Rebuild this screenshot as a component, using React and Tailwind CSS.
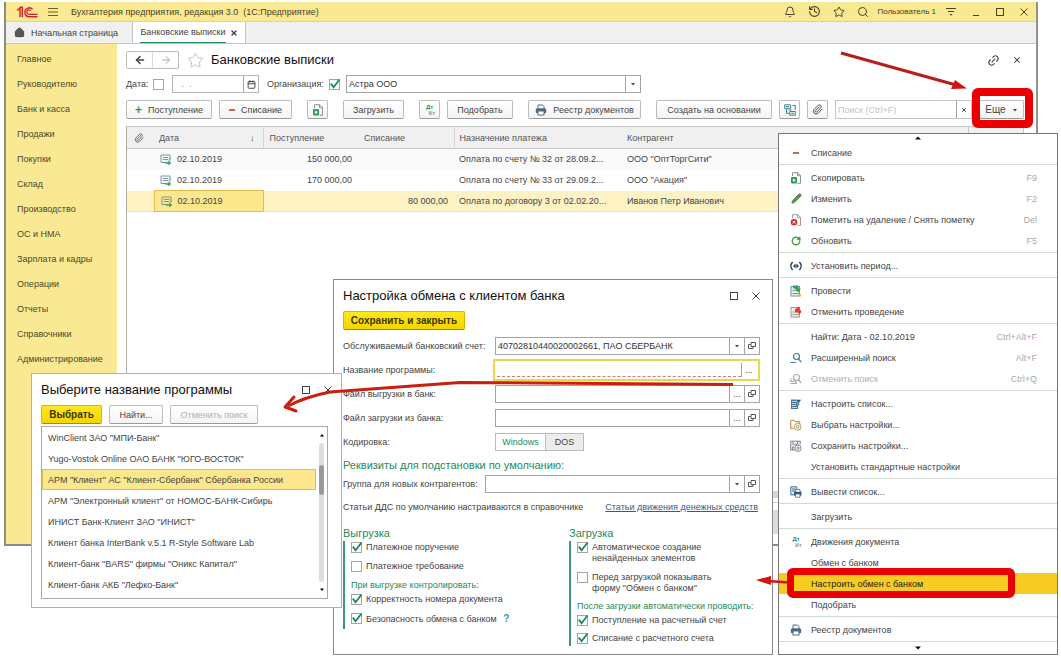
import React from 'react';
import clsx from 'clsx';
import { Bell, History, Star, Search, House, Paperclip, Link2, Calendar, X, ArrowLeft, ArrowRight, RotateCw, Pencil } from 'lucide-react';

const SECTIONS = [
  'Главное', 'Руководителю', 'Банк и касса', 'Продажи', 'Покупки', 'Склад', 'Производство',
  'ОС и НМА', 'Зарплата и кадры', 'Операции', 'Отчеты', 'Справочники', 'Администрирование',
];

const STATEMENTS = [
  { date: '02.10.2019', income: '150 000,00', expense: '', purpose: 'Оплата по счету № 32 от 28.09.2...', partner: 'ООО "ОптТоргСити"' },
  { date: '02.10.2019', income: '170 000,00', expense: '', purpose: 'Оплата по счету № 33 от 29.09.2...', partner: 'ООО "Акация"' },
  { date: '02.10.2019', income: '', expense: '80 000,00', purpose: 'Оплата по договору 3 от 02.02.20...', partner: 'Иванов Петр Иванович', selected: true },
];

const PROGRAMS = [
  'WinClient ЗАО "МПИ-Банк"',
  'Yugo-Vostok Online ОАО БАНК "ЮГО-ВОСТОК"',
  'АРМ "Клиент" АС "Клиент-Сбербанк" Сбербанка России',
  'АРМ "Электронный клиент" от НОМОС-БАНК-Сибирь',
  'ИНИСТ Банк-Клиент ЗАО "ИНИСТ"',
  'Клиент банка InterBank v.5.1 R-Style Software Lab',
  'Клиент-банк "BARS" фирмы "Оникс Капитал"',
  'Клиент-банк АКБ "Лефко-Банк"',
];

/* ---------- icons ---------- */

const Logo = () => (
  <svg viewBox="0 0 22 12" className="h-3 w-[22px]" fill="none" stroke="#d3232a" strokeWidth="1.5">
    <path d="M1 4.5 4 2v9M6.300 11V1.200L3.500 1.200" />
    <path d="M16.500 3.200A4.500 4.500 0 1 0 12.500 10.800H21.500" />
    <path d="M14.800 4.600A2.300 2.300 0 1 0 12.600 8.400H21.500" strokeWidth="1.200" />
  </svg>
);

const CopyIcon = () => (
  <svg viewBox="0 0 12 12" className="size-3" fill="none">
    <path d="M2.500 4V.7h5.300l2.700 2.700v7.900H7.500" stroke="#7f9a8b" />
    <path d="M7.500.7v3h3" stroke="#7f9a8b" />
    <rect x="1" y="5" width="6" height="6.500" rx="1" fill="#2f9a5b" />
    <path d="M4 6.500v3.500M2.400 8.200h3.200" stroke="#fff" />
  </svg>
);

const DeleteMarkIcon = () => (
  <svg viewBox="0 0 12 12" className="size-3" fill="none">
    <path d="M2.500 4V.7h5.300l2.700 2.700v7.900H7.500M7.500.7v3h3" stroke="#a99a9a" />
    <circle cx="4" cy="8.200" r="3.300" fill="#c9343b" />
    <path d="M2.700 6.900l2.600 2.600M5.300 6.900 2.700 9.500" stroke="#fff" />
  </svg>
);

const PeriodIcon = () => (
  <svg viewBox="0 0 12 12" className="size-3" fill="none" stroke="#1d3f5e" strokeWidth="1.500">
    <path d="M2.600 2C.4 4.300.4 7.700 2.600 10M9.400 2c2.200 2.300 2.200 5.700 0 8" />
    <path d="M5.600 3.500 3 6l2.600 2.500zM6.400 3.500 9 6 6.400 8.500z" fill="#1d3f5e" stroke="none" />
  </svg>
);

const PostIcon = () => (
  <svg viewBox="0 0 12 12" className="size-3" fill="none">
    <rect x="1" y="1.500" width="8.500" height="9.500" fill="#eaf2ec" stroke="#6f93a5" />
    <path d="M2.500 5.500h4M2.500 8.500h6" stroke="#6f93a5" />
    <path d="M3 .5h5.500v3H11L8 7.500 5 3.500H3z" fill="#2fa35d" />
    <path d="M8 9h3v2.500H8z" fill="#e3b54a" />
  </svg>
);

const UnpostIcon = () => (
  <svg viewBox="0 0 12 12" className="size-3" fill="none">
    <rect x="1" y="1.500" width="8.500" height="9.500" fill="#f3ead8" stroke="#9a9a8a" />
    <path d="M2.500 6h3M2.500 8.500h6" stroke="#8fa5b0" />
    <path d="M5 3.500 8.500.5 11.500 6l-2.500 2.500L8 6.500H5z" fill="#e0402f" />
  </svg>
);

const FindIcon = ({ color = '#3a7ca8', cancel }) => (
  <svg viewBox="0 0 12 12" className="size-3" fill="none" stroke={color} strokeWidth="1.200">
    <circle cx="6.500" cy="4.500" r="3" />
    <path d="m8.600 6.800 2.600 3.200M.5 10.500h5.500" />
    {cancel && <path d="M1 5.500v3h2.500M4 7l3 3.500" />}
  </svg>
);

const ListSettingsIcon = () => (
  <svg viewBox="0 0 12 12" className="size-3" fill="none">
    <path d="M1 1.500h7v9.500H1z" fill="#4d7896" />
    <path d="M2 3.500h5M2 5.500h4M2 7.500h4M2 9.500h5" stroke="#dbe7ef" strokeWidth=".8" />
    <path d="M5.500 1.500h6L9.300 4.500v3.700L7.700 7V4.500z" fill="#2d587a" stroke="#fff" strokeWidth=".5" />
  </svg>
);

const SettingsIcon = ({ color, fill }) => (
  <svg viewBox="0 0 12 12" className="size-3" fill="none" stroke={color}>
    <path d="M.7 1.200h3.500l1 1.300h4.500v3M.7 1.200v8.500h3" fill={fill} />
    <circle cx="7.700" cy="7.800" r="3.400" fill="#fff" />
    <circle cx="7.700" cy="7.800" r="1.300" />
  </svg>
);

const SaveSettingsIcon = () => (
  <svg viewBox="0 0 12 12" className="size-3" fill="none" stroke="#7a8590">
    <path d="M5 10H.7V1.200h9.600v3M3 1.200v3h4.500v-3M2.500 10V7H4" fill="#e6ebef" />
    <circle cx="8" cy="8.200" r="3.200" fill="#fff" />
    <circle cx="8" cy="8.200" r="1.200" />
  </svg>
);

const PrinterIcon = () => (
  <svg viewBox="0 0 12 12" className="size-3" fill="none">
    <path d="M3 4.500V1h4.500L9 2.500v2" stroke="#4f6d84" />
    <rect x=".8" y="4.200" width="10.400" height="5" rx="1.500" fill="#4a6a82" />
    <rect x="3" y="7" width="6" height="4" fill="#fff" stroke="#4f6d84" />
  </svg>
);

const OutputListIcon = () => (
  <svg viewBox="0 0 12 12" className="size-3" fill="none">
    <path d="M.8.800h6v8h-6z" fill="#e8f0f5" stroke="#3f6c8c" />
    <path d="M2 3h3.500M2 5h3" stroke="#3f6c8c" />
    <path d="M4 5.500h7.500v4H4z" fill="#31597a" />
    <path d="M5.500 8h4.500v3.200H5.500zM5.500 5.500v-2h4.500v2" fill="#fff" stroke="#3f6c8c" strokeWidth=".8" />
  </svg>
);

const DtKt = () => (
  <span className="flex flex-col text-[6px] leading-[6px] font-bold">
    <span className="text-[#2f8a68]">Дт</span>
    <span className="pl-[5px] text-[#c08080]">Кт</span>
  </span>
);

const StructureIcon = () => (
  <svg viewBox="0 0 12 12" className="size-3" fill="none" stroke="#3c8584">
    <path d="M.7.8h6v3.500h-6zM5.800 7.500h5.500v3.700H5.800zM2.500 4.300v5h3.300" />
    <path d="M4.500 6h3M8.500 1.500h2.800v4.300M2 2.500h3M7.300 9.300h2.500" stroke="#4a77a8" />
  </svg>
);

const DocIcon = () => (
  <svg viewBox="0 0 12 12" className="size-3" fill="none">
    <path d="M10 7V2H1v7.500h5" stroke="#7b96a3" />
    <path d="M2.800 4.500h5.500M2.800 6.500h5.500" stroke="#7b96a3" />
    <path d="M5.500 9.300h3V7.800l2.500 2.200-2.500 2v-1.500h-3zM10 4.500V8" fill="#43a365" stroke="#43a365" strokeWidth=".6" />
  </svg>
);

const OpenIcon = () => (
  <svg viewBox="0 0 8 8" className="size-2" fill="none" stroke="#555">
    <path d="M3 .5h4.500v4H3zM2.500 2.500h-2v4H5V5" />
  </svg>
);

const MaximizeIcon = () => (
  <svg viewBox="0 0 8 8" className="size-2" fill="none" stroke="currentColor">
    <rect x=".5" y=".5" width="7" height="7" />
  </svg>
);

const CloseIcon = () => (
  <svg viewBox="0 0 8 8" className="size-2" fill="none" stroke="currentColor">
    <path d="m.5.5 7 7M7.500.5l-7 7" />
  </svg>
);

const DropDot = () => (
  <svg viewBox="0 0 6 4" className="h-1 w-1.5" fill="#444"><path d="M1 1h4L3 3.500z" /></svg>
);

/* ---------- shared controls ---------- */

const Button = ({ className, children, ...rest }) => (
  <button
    type="button"
    className={clsx('flex h-[19px] shrink-0 items-center justify-center gap-1.5 rounded-xs border border-[#bcbcbc] border-b-[#9a9a9a] bg-linear-to-b from-white to-[#f4f4f4] whitespace-nowrap', className)}
    {...rest}
  >
    {children}
  </button>
);

const PrimaryButton = ({ className, children }) => (
  <button type="button" className={clsx('h-[19px] rounded-xs border border-[#d6b800] border-b-[#a08a00] bg-linear-to-b from-[#ffe81a] to-[#f6d400] text-[10px] font-bold text-[#3d3600]', className)}>
    {children}
  </button>
);

const Tick = ({ checked, ...rest }) => (
  <span className="relative block size-[11px] shrink-0">
    <input type="checkbox" defaultChecked={checked} className="peer block size-[11px] appearance-none border border-[#a5a5a5] bg-white" {...rest} />
    <svg viewBox="0 0 12 12" className="pointer-events-none absolute inset-0 hidden overflow-visible peer-checked:block" fill="none" stroke="#1d8a5a" strokeWidth="2">
      <path d="m2 5 3 4 6.500-8.500" />
    </svg>
  </span>
);

const CheckRow = ({ checked, children, className }) => (
  <label className={clsx('flex items-start gap-1 leading-[11px]', className)}>
    <Tick checked={checked} />
    <span>{children}</span>
  </label>
);

const Cell = ({ children, ...rest }) => (
  <button type="button" className="flex w-[15px] shrink-0 items-center justify-center border-l border-[#a3a3a3]" {...rest}>
    {children}
  </button>
);

const FieldRow = ({ id, label, value = '', labelClass = 'w-[152px]', dots, select }) => (
  <div className="flex h-[18px] items-center">
    <label htmlFor={id} className={clsx('shrink-0 whitespace-nowrap', labelClass)}>{label}</label>
    <div className="flex h-full min-w-0 grow border border-[#a3a3a3] bg-white">
      {select ? (
        <select id={id} className="min-w-0 grow appearance-none px-0.5 text-[#333]">
          <option>{value}</option>
        </select>
      ) : (
        <input id={id} defaultValue={value} className="min-w-0 grow px-0.5" />
      )}
      <Cell aria-label="Выбрать">{dots ? '...' : <DropDot />}</Cell>
      <Cell aria-label="Открыть"><OpenIcon /></Cell>
    </div>
  </div>
);

/* ---------- main window ---------- */

const TitleBar = () => (
  <header className="flex h-5 items-center border-b border-[#cfd8a0] bg-[#f9e993] pr-2 pl-2.5 text-[#4a4222]">
    <Logo />
    <svg viewBox="0 0 10 10" className="ml-2.5 size-2.5" stroke="#6b6130"><path d="M0 1.500h10M0 5h10M0 8.500h10" /></svg>
    <h1 className="ml-[13px] whitespace-pre">Бухгалтерия предприятия, редакция 3.0  (1С:Предприятие)</h1>
    <div className="ml-auto flex items-center gap-3">
      <button type="button" aria-label="Уведомления"><Bell size={12} strokeWidth={2} /></button>
      <button type="button" aria-label="История"><History size={13} strokeWidth={2} /></button>
      <button type="button" aria-label="Избранное"><Star size={12} strokeWidth={2} /></button>
      <button type="button" aria-label="Поиск"><Search size={12} strokeWidth={2} /></button>
    </div>
    <span className="ml-2 text-[8px]">Пользователь 1</span>
    <div className="ml-2.5 flex items-center gap-4">
      <svg viewBox="0 0 10 10" className="size-2.5" stroke="currentColor" fill="currentColor"><path d="M0 1.500h10M2 4.500h6" /><path d="M3.500 7h3L5 8.800z" strokeWidth="0" /></svg>
      <button type="button" aria-label="Свернуть"><svg viewBox="0 0 8 8" className="size-2" stroke="currentColor"><path d="M1 7.500h6" /></svg></button>
      <button type="button" aria-label="Развернуть"><MaximizeIcon /></button>
      <button type="button" aria-label="Закрыть"><CloseIcon /></button>
    </div>
  </header>
);

const Tabs = () => (
  <nav className="flex h-[22px] border-b border-[#c4c4c4] bg-[#f0f0f0]">
    <a href="#home" className="flex w-[126px] items-center gap-1.5 pl-2">
      <House size={11} fill="#555" strokeWidth={2} />
      Начальная страница
    </a>
    <div className="flex w-[114px] items-center justify-center gap-1 border-x border-[#c4c4c4] bg-white px-1">
      <a href="#statements" className="flex h-full items-center border-b border-[#1d8a5a] whitespace-nowrap">Банковские выписки</a>
      <button type="button" aria-label="Закрыть вкладку"><X size={8} strokeWidth={4} /></button>
    </div>
  </nav>
);

const Filters = () => (
  <div className="mt-1.5 flex h-[18px] items-center">
    <label htmlFor="by-date" className="w-[27px]">Дата:</label>
    <Tick id="by-date" />
    <div className="ml-2 flex h-full w-[87px] border border-[#b5b5b5]">
      <input aria-label="Дата" defaultValue=" .  ." className="min-w-0 grow px-1.5 text-[#999]" />
      <Cell aria-label="Календарь"><Calendar size={9} strokeWidth={2.500} /></Cell>
    </div>
    <label htmlFor="by-org" className="ml-2 w-[62px]">Организация:</label>
    <Tick id="by-org" checked />
    <div className="ml-1.5 flex h-full w-[295px] border border-[#a3a3a3]">
      <select aria-label="Организация" className="grow appearance-none px-0.5 text-[#333]">
        <option>Астра ООО</option>
      </select>
      <Cell aria-label="Выбрать организацию"><DropDot /></Cell>
    </div>
  </div>
);

const Toolbar = () => (
  <div className="mt-[7px] flex items-center gap-[15px]">
    <div className="flex gap-[7px]">
      <Button className="w-[86px]"><b className="text-[12px] text-[#2c9a45]">+</b>Поступление</Button>
      <Button className="w-[73px]"><b className="h-[2px] w-1.5 bg-[#c8645a]" />Списание</Button>
    </div>
    <Button className="w-[21px]" aria-label="Скопировать"><CopyIcon /></Button>
    <Button className="w-[61px]">Загрузить</Button>
    <div className="flex gap-[7px]">
      <Button className="w-[21px]" aria-label="Движения документа"><DtKt /></Button>
      <Button className="w-[66px]">Подобрать</Button>
    </div>
    <Button className="w-[113px]"><PrinterIcon />Реестр документов</Button>
    <div className="flex min-w-0 grow gap-[7px]">
      <Button className="w-[116px]">Создать на основании</Button>
      <Button className="w-[21px]" aria-label="Структура подчиненности"><StructureIcon /></Button>
      <Button className="w-[21px]" aria-label="Файлы"><Paperclip size={11} /></Button>
      <div className="flex h-[19px] min-w-0 grow border border-[#c4c4c4]">
        <input aria-label="Поиск" placeholder="Поиск (Ctrl+F)" className="min-w-0 grow px-0.5 placeholder:text-[#c4c4c4]" />
        <Cell aria-label="Очистить"><X size={6} strokeWidth={4} /></Cell>
      </div>
      <Button className="w-[45px] text-[10px]">Еще <DropDot /></Button>
    </div>
  </div>
);

const StatementsTable = () => (
  <table className="w-full table-fixed border-collapse text-left">
    <thead>
      <tr className="h-[22px] border-y border-[#c9c9c9] bg-[#f0f0f0] text-[#555]">
        <th className="w-[27px] pl-[7px]"><Paperclip size={10} /></th>
        <th className="w-[109px] border-r border-[#d5d5d5] pl-[5px] font-normal">
          <span className="flex justify-between pr-2">Дата<span>↓</span></span>
        </th>
        <th className="w-[95px] pl-1.5 font-normal">Поступление</th>
        <th className="w-[96px] border-r border-[#d5d5d5] pl-1.5 font-normal">Списание</th>
        <th className="w-[167px] pl-[5px] font-normal">Назначение платежа</th>
        <th className="pl-1.5 font-normal">Контрагент</th>
        <th className="w-[55px] border-x border-[#c9c9c9]" />
      </tr>
    </thead>
    <tbody>
      {STATEMENTS.map((s, i) => (
        <tr key={i} className={clsx('h-[21px] whitespace-nowrap', s.selected ? 'border-b border-[#efe3b0] bg-[#fdf2c4]' : i === 0 ? 'bg-[#fafafa]' : 'bg-white')}>
          <td />
          <td className={clsx('pl-1.5', s.selected && 'border border-[#dfbf55] bg-[#fde78d]')}>
            <span className="flex items-center gap-[5px]"><DocIcon />{s.date}</span>
          </td>
          <td className="pr-1.5 text-right">{s.income}</td>
          <td className="pr-1.5 text-right">{s.expense}</td>
          <td className="pl-[5px]">{s.purpose}</td>
          <td className="pl-1.5">{s.partner}</td>
          <td />
        </tr>
      ))}
    </tbody>
  </table>
);

const MainWindow = () => (
  <div className="mr-[23px] ml-1 border-x-2 border-b-2 border-[#8b8b84] border-r-[#8f9685]">
    <TitleBar />
    <Tabs />
    <div className="flex">
      <nav className="w-[111px] shrink-0 bg-[#f9e993] pt-0.5">
        <ul>
          {SECTIONS.map((s) => (
            <li key={s}><a href="#section" className="flex h-[25px] items-center pl-[11px] text-[#4f4726]">{s}</a></li>
          ))}
        </ul>
      </nav>
      <main className="min-w-0 grow pt-[7px] pr-3 pb-2.5 pl-[9px]">
        <div className="flex h-[18px] items-center">
          <div className="flex h-full w-[53px] rounded-xs border border-[#bcbcbc]">
            <button type="button" aria-label="Назад" className="flex grow items-center justify-center border-r border-[#dcdcdc]"><ArrowLeft size={12} strokeWidth={3} /></button>
            <button type="button" aria-label="Вперед" className="flex grow items-center justify-center text-[#aaa]"><ArrowRight size={12} /></button>
          </div>
          <Star size={17} strokeWidth={1} className="ml-2 text-[#aaa]" />
          <h2 className="ml-[7px] text-[13px] text-[#111]">Банковские выписки</h2>
          <div className="ml-auto flex items-center gap-3 pr-0.5">
            <Link2 size={13} className="-rotate-45" />
            <button type="button" aria-label="Закрыть"><X size={10} strokeWidth={2.500} /></button>
          </div>
        </div>
        <Filters />
        <Toolbar />
        <div className="mt-[7px] flex min-h-[377px] flex-col justify-between border-b border-l border-b-[#d0d0d0] border-l-[#b0b0b0]">
          <StatementsTable />
          <div className="mb-1 h-[7px] bg-[#d6d6d6]" />
        </div>
        <div className="mt-[7px] h-6 bg-[#dcdcdc]" />
      </main>
    </div>
  </div>
);

/* ---------- context menu ---------- */

const Minus = () => <span className="h-[2px] w-1.5 bg-[#c8645a]" />;

const MENU = [
  [{ text: 'Списание', icon: <Minus /> }],
  [
    { text: 'Скопировать', icon: <CopyIcon />, keys: 'F9' },
    { text: 'Изменить', icon: <Pencil size={11} fill="#5f9a55" stroke="#4a7a44" strokeWidth={2} />, keys: 'F2' },
    { text: 'Пометить на удаление / Снять пометку', icon: <DeleteMarkIcon />, keys: 'Del' },
    { text: 'Обновить', icon: <RotateCw size={10} stroke="#4ba03c" strokeWidth={3.500} />, keys: 'F5' },
  ],
  [{ text: 'Установить период...', icon: <PeriodIcon /> }],
  [{ text: 'Провести', icon: <PostIcon /> }, { text: 'Отменить проведение', icon: <UnpostIcon /> }],
  [
    { text: 'Найти: Дата - 02.10.2019', keys: 'Ctrl+Alt+F' },
    { text: 'Расширенный поиск', icon: <FindIcon />, keys: 'Alt+F' },
    { text: 'Отменить поиск', icon: <FindIcon color="#aaa" cancel />, keys: 'Ctrl+Q', disabled: true },
  ],
  [
    { text: 'Настроить список...', icon: <ListSettingsIcon /> },
    { text: 'Выбрать настройки...', icon: <SettingsIcon color="#b79a5a" fill="#f7e3a5" /> },
    { text: 'Сохранить настройки...', icon: <SaveSettingsIcon /> },
    { text: 'Установить стандартные настройки' },
  ],
  [{ text: 'Вывести список...', icon: <OutputListIcon /> }],
  [{ text: 'Загрузить' }],
  [
    { text: 'Движения документа', icon: <DtKt /> },
    { text: 'Обмен с банком' },
    { text: 'Настроить обмен с банком', active: true },
    { text: 'Подобрать' },
  ],
  [{ text: 'Реестр документов', icon: <PrinterIcon /> }],
];

const MoreMenu = () => (
  <div role="menu" className="absolute top-[133px] left-[778px] w-[280px] border border-[#777] bg-white">
    <div className="flex h-2 items-center justify-center"><svg viewBox="0 0 6 4" className="h-1 w-1.5"><path d="M0 3.500h6L3 .5z" /></svg></div>
    {MENU.map((group, i) => (
      <div key={i} className={clsx('pb-px', i > 0 && 'border-t border-[#d3dad3] pt-0.5')}>
        {group.map((item) => (
          <button
            key={item.text}
            type="button"
            role="menuitem"
            disabled={item.disabled}
            className={clsx('flex h-[21px] w-full items-center pr-5 pl-[11px]', item.active && 'bg-[#f8cb22] text-[#222]', item.disabled && 'text-[#b0b0b0]')}
          >
            <span className="flex w-3 justify-center">{item.icon}</span>
            <span className="ml-[9px]">{item.text}</span>
            {item.keys && <span className="ml-auto text-[#aaa]">{item.keys}</span>}
          </button>
        ))}
      </div>
    ))}
    <div className="flex h-[13px] items-center justify-center border-t border-[#d3dad3]"><svg viewBox="0 0 6 4" className="h-1 w-1.5"><path d="M0 .5h6L3 3.500z" /></svg></div>
  </div>
);

/* ---------- dialogs ---------- */

const DialogTitle = ({ children }) => (
  <div className="flex h-[31px] items-center">
    <h2 className="text-[13px] whitespace-nowrap text-[#111]">{children}</h2>
    <div className="ml-auto flex items-center gap-3.5">
      <button type="button" aria-label="Развернуть"><MaximizeIcon /></button>
      <button type="button" aria-label="Закрыть"><CloseIcon /></button>
    </div>
  </div>
);

const ExchangeDialog = () => (
  <section className="absolute top-[279px] left-[333px] w-[440px] border border-[#888] bg-white pr-3 pb-2 pl-[9px]">
    <DialogTitle>Настройка обмена с клиентом банка</DialogTitle>
    <PrimaryButton className="w-[122px]">Сохранить и закрыть</PrimaryButton>
    <div className="mt-[7px] flex flex-col gap-1.5">
      <FieldRow id="account" label="Обслуживаемый банковский счет:" value="40702810440020002661, ПАО СБЕРБАНК" select />
      <div className="flex h-[18px] items-center">
        <label htmlFor="program" className="w-[150px] shrink-0">Название программы:</label>
        <div className="flex h-[22px] min-w-0 grow border-2 border-[#ead84a] bg-white p-0.5">
          <input id="program" className="min-w-0 grow border-b border-dashed border-[#d77]" />
          <Cell aria-label="Выбрать программу">...</Cell>
        </div>
      </div>
      <FieldRow id="file-out" label="Файл выгрузки в банк:" dots />
      <FieldRow id="file-in" label="Файл загрузки из банка:" dots />
      <div className="flex h-[18px] items-center">
        <span className="w-[152px] shrink-0">Кодировка:</span>
        <button type="button" className="h-full w-[51px] border border-[#bcbcbc] text-[#1d8a5a]">Windows</button>
        <button type="button" className="h-full w-[38px] border border-l-0 border-[#bcbcbc] bg-[#ececec]">DOS</button>
      </div>
    </div>
    <h3 className="mt-1.5 mb-0.5 text-[11px] leading-4 text-[#1d8a5a]">Реквизиты для подстановки по умолчанию:</h3>
    <FieldRow id="group" label="Группа для новых контрагентов:" labelClass="w-[142px]" select />
    <p className="mt-[7px] flex justify-between pr-0.5 leading-[14px] whitespace-nowrap">
      Статьи ДДС по умолчанию настраиваются в справочнике
      <a href="#articles" className="text-[#2f5c94] underline">Статьи движения денежных средств</a>
    </p>
    <div className="mt-[11px] flex">
      <div className="w-[226px] shrink-0">
        <h3 className="text-[11px] leading-4 text-[#1d8a5a]">Выгрузка</h3>
        <div className="flex flex-col border-l-2 border-[#3f9a72] pt-px pb-1 pl-1.5">
          <CheckRow checked>Платежное поручение</CheckRow>
          <CheckRow className="mt-2">Платежное требование</CheckRow>
          <h4 className="mt-2 leading-[11px] text-[#1d8a5a]">При выгрузке контролировать:</h4>
          <CheckRow checked className="mt-[3px]">Корректность номера документа</CheckRow>
          <CheckRow checked className="mt-2">Безопасность обмена с банком <b className="ml-1 text-[10px] text-[#2f9ab0]">?</b></CheckRow>
        </div>
      </div>
      <div className="grow">
        <h3 className="text-[11px] leading-4 text-[#1d8a5a]">Загрузка</h3>
        <div className="flex flex-col border-l-2 border-[#3f9a72] pt-px pb-0.5 pl-1.5 whitespace-nowrap">
          <CheckRow checked>Автоматическое создание<br />ненайденных элементов</CheckRow>
          <CheckRow className="mt-2">Перед загрузкой показывать<br />форму "Обмен с банком"</CheckRow>
          <h4 className="mt-[7px] leading-[11px] text-[#1d8a5a]">После загрузки автоматически проводить:</h4>
          <CheckRow checked className="mt-[3px]">Поступление на расчетный счет</CheckRow>
          <CheckRow checked className="mt-[7px]">Списание с расчетного счета</CheckRow>
        </div>
      </div>
    </div>
  </section>
);

const ProgramDialog = () => (
  <section className="absolute top-[373px] left-[31px] w-[311px] border border-[#b0b0b0] bg-white px-[9px] pb-2">
    <DialogTitle>Выберите название программы</DialogTitle>
    <div className="flex gap-[7px]">
      <PrimaryButton className="w-[61px]">Выбрать</PrimaryButton>
      <Button className="w-[54px]">Найти...</Button>
      <Button className="w-[88px] text-[#b0b0b0]" disabled>Отменить поиск</Button>
    </div>
    <div className="mt-0.5 mr-1 flex border border-[#a8a8a8]">
      <ul role="listbox" aria-label="Программы" className="grow pb-[3px]">
        {PROGRAMS.map((p, i) => (
          <li
            key={p}
            role="option"
            aria-selected={i === 2}
            className={clsx('flex h-[21px] items-center border px-[5px] whitespace-nowrap', i === 2 ? 'border-[#dfbf55] bg-[#fde78d]' : 'border-transparent')}
          >
            {p}
          </li>
        ))}
      </ul>
      <div className="flex w-[11px] flex-col items-center justify-between py-1.5">
        <svg viewBox="0 0 6 4" className="h-1 w-1.5"><path d="M1 3.500h4L3 1z" /></svg>
        <div className="my-1.5 w-[5px] grow rounded-full bg-[#dedede] pt-[22px]">
          <div className="h-[30px] rounded-full bg-[#999]" />
        </div>
        <svg viewBox="0 0 6 4" className="h-1 w-1.5"><path d="M1 .5h4L3 3z" /></svg>
      </div>
    </div>
  </section>
);

/* hand-drawn markers over the windows */
const Annotations = () => (
  <>
    <div className="pointer-events-none absolute top-[88px] left-[972px] h-10 w-[61px] rounded-md border-8 border-[#ea0000]" />
    <div className="pointer-events-none absolute top-[568px] left-[787px] h-[30px] w-[228px] rounded-md border-[7px] border-[#ea0000]" />
    <svg viewBox="0 0 1061 657" width="1061" height="657" className="pointer-events-none absolute top-0 left-0" fill="none">
      <path d="M841 53 956 85" stroke="#b81c1c" strokeWidth="3" />
      <path d="M967 88.500 951 89l4-9z" fill="#d01414" />
      <path d="M733 384.500 460 382.500Q400 387 330 392 305 397 288 406" stroke="#c8200f" strokeWidth="3" strokeLinejoin="round" />
      <path d="M294 397 285 407l11 4" stroke="#d01a14" strokeWidth="3" strokeLinecap="round" strokeLinejoin="round" />
      <path d="M789 582.500 768 581" stroke="#d01414" strokeWidth="2.500" />
      <path d="M756 580 771 576v9z" fill="#d01414" />
    </svg>
  </>
);

const App = () => (
  <div className="relative min-h-screen overflow-hidden bg-white pt-0.5 font-['Liberation_Sans',Arial,sans-serif] text-[9px] leading-3 text-[#444]">
    <MainWindow />
    <MoreMenu />
    <ExchangeDialog />
    <ProgramDialog />
    <Annotations />
  </div>
);

export default App;
